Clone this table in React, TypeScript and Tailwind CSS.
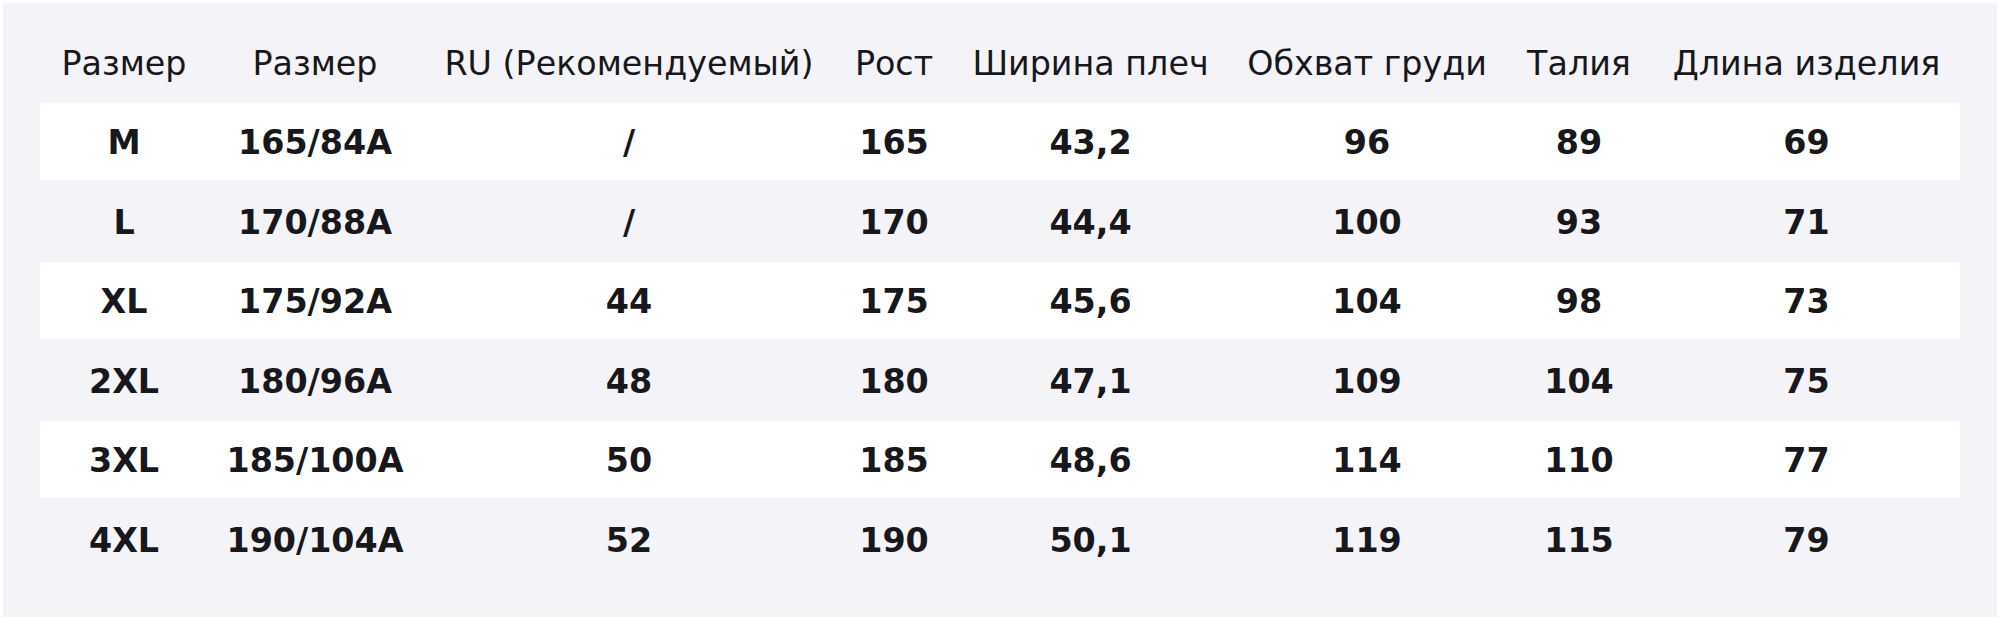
import React from "react";

const headers = [
  "Размер",
  "Размер",
  "RU (Рекомендуемый)",
  "Рост",
  "Ширина плеч",
  "Обхват груди",
  "Талия",
  "Длина изделия",
];

const rows: string[][] = [
  ["M", "165/84A", "/", "165", "43,2", "96", "89", "69"],
  ["L", "170/88A", "/", "170", "44,4", "100", "93", "71"],
  ["XL", "175/92A", "44", "175", "45,6", "104", "98", "73"],
  ["2XL", "180/96A", "48", "180", "47,1", "109", "104", "75"],
  ["3XL", "185/100A", "50", "185", "48,6", "114", "110", "77"],
  ["4XL", "190/104A", "52", "190", "50,1", "119", "115", "79"],
];

const grid =
  "grid grid-cols-[168px_214px_414px_116px_277px_276px_148px_307px]";

export default function App() {
  return (
    <div
      className="w-[2000px] h-[620px] bg-white p-[3px]"
      style={{ fontFamily: '"DejaVu Sans", "Noto Sans", sans-serif' }}
    >
      <div className="h-full bg-[#f4f3f8] px-[37px] text-[#17171c]">
        <div className={`${grid} pt-[41px] pb-[19px] text-[33.33px] leading-[40px]`}>
          {headers.map((h, i) => (
            <div key={i} className="text-center whitespace-nowrap">
              {h}
            </div>
          ))}
        </div>
        {rows.map((r, ri) => (
          <div
            key={ri}
            className={`${grid} items-center pt-[3px] text-[33.33px] leading-[40px] font-bold ${
              ri % 2 === 0 ? "h-[77px] bg-white" : "h-[82px]"
            }`}
          >
            {r.map((c, ci) => (
              <div key={ci} className="text-center whitespace-nowrap">
                {c}
              </div>
            ))}
          </div>
        ))}
      </div>
    </div>
  );
}
